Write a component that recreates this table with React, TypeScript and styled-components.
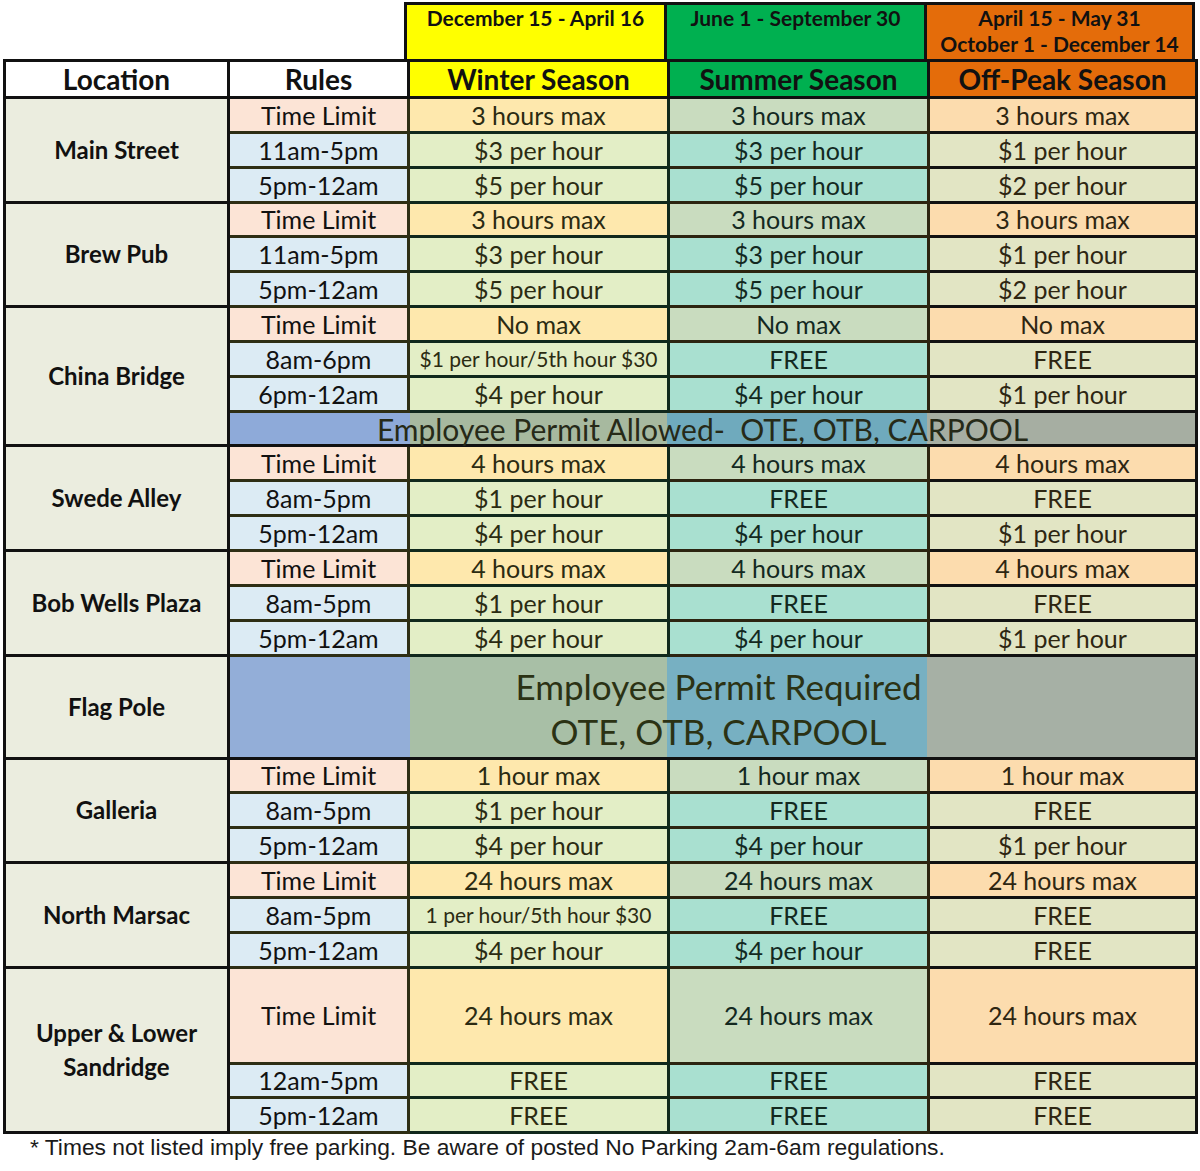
import React from 'react'
import styled, { createGlobalStyle } from 'styled-components'

const GlobalStyle = createGlobalStyle`
  body {
    margin: 0;
    background: #ffffff;
    font-family: Lato, 'Open Sans', sans-serif;
  }
  * {
    box-sizing: border-box;
  }
`

const COLUMNS = '224px 180px 260px 260px 268px'
const ROW = '34.85px'

const Page = styled.div`
  width: 1200px;
  padding-top: 2px;
`

const Table = styled.div`
  margin-left: 3px;
  width: 1195px;
`

const Grid = styled.div<{ $rows: string }>`
  display: grid;
  grid-template-columns: ${COLUMNS};
  grid-template-rows: ${({ $rows }) => $rows};
`

const DateCell = styled.div<{ $bg: string; $col: number }>`
  grid-column: ${({ $col }) => $col};
  background: ${({ $bg }) => $bg};
  border: 3px solid #111;
  border-bottom: none;
  border-left-width: ${({ $col }) => ($col === 3 ? '3px' : '0')};
  margin-left: ${({ $col }) => ($col === 3 ? '-3px' : '0')};
  display: flex;
  flex-direction: column;
  align-items: center;
  font-weight: 700;
  font-size: 21px;
  line-height: 26px;
  color: #111;
`

const HeadRow = styled(Grid)`
  border-top: 3px solid #111;
  border-bottom: 3px solid #111;
  border-left: 3px solid #111;
`

const HeadCell = styled.div<{ $bg: string }>`
  background: ${({ $bg }) => $bg};
  border-right: 3px solid #111;
  display: flex;
  align-items: center;
  justify-content: center;
  font-weight: 700;
  font-size: 28px;
  color: #111;
`

const Body = styled.div`
  border-left: 3px solid #111;
`

const LocationCell = styled.div`
  grid-column: 1;
  grid-row: 1 / -1;
  background: #ebeddf;
  border-right: 3px solid #111;
  border-bottom: 3px solid #111;
  display: flex;
  align-items: center;
  justify-content: center;
  text-align: center;
  font-weight: 700;
  font-size: 24px;
  line-height: 34px;
  color: #111;
`

const Cell = styled.div<{ $bg: string; $line: string; $ink: string; $small?: boolean }>`
  background: ${({ $bg }) => $bg};
  border-right: 3px solid ${({ $line }) => $line};
  border-bottom: 3px solid ${({ $line }) => $line};
  display: flex;
  align-items: center;
  justify-content: center;
  white-space: nowrap;
  font-size: ${({ $small }) => ($small ? '21px' : '25px')};
  color: ${({ $ink }) => $ink};
`

const PermitBanner = styled.div`
  grid-column: 2 / -1;
  background: linear-gradient(
    to right,
    #8eaad9 0 180px,
    #a7b99f 180px 437px,
    #6faabd 437px 697px,
    #a6aea2 697px
  );
  border-bottom: 3px solid #111;
  border-right: 3px solid #111;
  display: flex;
  align-items: center;
  justify-content: center;
  white-space: pre;
  font-size: 30px;
  color: #262a18;
  padding-right: 20px;
`

const RequiredBanner = styled(PermitBanner)`
  flex-direction: column;
  background: linear-gradient(
    to right,
    #93aed8 0 180px,
    #a8bfa6 180px 437px,
    #77b0c2 437px 697px,
    #a6b0a5 697px
  );
  font-size: 35px;
  line-height: 45px;
  color: #2b3214;
  padding-right: 0;
  padding-left: 12px;
  padding-top: 4px;
`

const Footnote = styled.p`
  margin: 0;
  padding: 0 0 0 30px;
  font-family: 'Liberation Sans', Arial, sans-serif;
  font-size: 22.8px;
  line-height: 26px;
  color: #1a1a1a;
`

type Season = { limitBg: string; priceBg: string; line: string; ink: string }

const RULES = { limitBg: '#fce4d6', priceBg: '#dcebf4', line: '#2e2e14', ink: '#111' }

const SEASONS: Season[] = [
  { limitBg: '#fee8ad', priceBg: '#e3eec6', line: '#10281c', ink: '#2b2b12' },
  { limitBg: '#c9dcbf', priceBg: '#a9e0d0', line: '#2c2410', ink: '#13291f' },
  { limitBg: '#fcdcae', priceBg: '#e2e5c4', line: '#111', ink: '#2e2612' },
]

type Group = {
  name: string[]
  rows: string[][]
  permit?: boolean
  tall?: boolean
}

const GROUPS: Group[] = [
  {
    name: ['Main Street'],
    rows: [
      ['Time Limit', '3 hours max', '3 hours max', '3 hours max'],
      ['11am-5pm', '$3 per hour', '$3 per hour', '$1 per hour'],
      ['5pm-12am', '$5 per hour', '$5 per hour', '$2 per hour'],
    ],
  },
  {
    name: ['Brew Pub'],
    rows: [
      ['Time Limit', '3 hours max', '3 hours max', '3 hours max'],
      ['11am-5pm', '$3 per hour', '$3 per hour', '$1 per hour'],
      ['5pm-12am', '$5 per hour', '$5 per hour', '$2 per hour'],
    ],
  },
  {
    name: ['China Bridge'],
    rows: [
      ['Time Limit', 'No max', 'No max', 'No max'],
      ['8am-6pm', '$1 per hour/5th hour $30', 'FREE', 'FREE'],
      ['6pm-12am', '$4 per hour', '$4 per hour', '$1 per hour'],
    ],
    permit: true,
  },
  {
    name: ['Swede Alley'],
    rows: [
      ['Time Limit', '4 hours max', '4 hours max', '4 hours max'],
      ['8am-5pm', '$1 per hour', 'FREE', 'FREE'],
      ['5pm-12am', '$4 per hour', '$4 per hour', '$1 per hour'],
    ],
  },
  {
    name: ['Bob Wells Plaza'],
    rows: [
      ['Time Limit', '4 hours max', '4 hours max', '4 hours max'],
      ['8am-5pm', '$1 per hour', 'FREE', 'FREE'],
      ['5pm-12am', '$4 per hour', '$4 per hour', '$1 per hour'],
    ],
  },
  { name: ['Flag Pole'], rows: [] },
  {
    name: ['Galleria'],
    rows: [
      ['Time Limit', '1 hour max', '1 hour max', '1 hour max'],
      ['8am-5pm', '$1 per hour', 'FREE', 'FREE'],
      ['5pm-12am', '$4 per hour', '$4 per hour', '$1 per hour'],
    ],
  },
  {
    name: ['North Marsac'],
    rows: [
      ['Time Limit', '24 hours max', '24 hours max', '24 hours max'],
      ['8am-5pm', '1 per hour/5th hour $30', 'FREE', 'FREE'],
      ['5pm-12am', '$4 per hour', '$4 per hour', 'FREE'],
    ],
  },
  {
    name: ['Upper & Lower', 'Sandridge'],
    rows: [
      ['Time Limit', '24 hours max', '24 hours max', '24 hours max'],
      ['12am-5pm', 'FREE', 'FREE', 'FREE'],
      ['5pm-12am', 'FREE', 'FREE', 'FREE'],
    ],
    tall: true,
  },
]

function rowTemplate(g: Group) {
  if (g.rows.length === 0) return '103px'
  if (g.tall) return `96px ${ROW} ${ROW}`
  return `repeat(${g.rows.length + (g.permit ? 1 : 0)}, ${ROW})`
}

function GroupRows({ group }: { group: Group }) {
  return (
    <Grid $rows={rowTemplate(group)}>
      <LocationCell>
        <div>
          {group.name.map((n) => (
            <div key={n}>{n}</div>
          ))}
        </div>
      </LocationCell>
      {group.rows.length === 0 && (
        <RequiredBanner>
          <span>Employee Permit Required</span>
          <span>OTE, OTB, CARPOOL</span>
        </RequiredBanner>
      )}
      {group.rows.map((row, ri) =>
        row.map((text, ci) => {
          const col = ci === 0 ? RULES : SEASONS[ci - 1]
          const bg = ri === 0 ? col.limitBg : col.priceBg
          return (
            <Cell key={ri + '-' + ci} $bg={bg} $line={col.line} $ink={col.ink} $small={text.includes('/')}>
              {text}
            </Cell>
          )
        })
      )}
      {group.permit && <PermitBanner>{'Employee Permit Allowed-  OTE, OTB, CARPOOL'}</PermitBanner>}
    </Grid>
  )
}

export default function App() {
  return (
    <Page>
      <GlobalStyle />
      <Table>
        <Grid $rows="57px">
          <DateCell $bg="#ffff00" $col={3}>
            <span>December 15 - April 16</span>
          </DateCell>
          <DateCell $bg="#00b050" $col={4}>
            <span>June 1 - September 30</span>
          </DateCell>
          <DateCell $bg="#e46c0a" $col={5}>
            <span>April 15 - May 31</span>
            <span>October 1 - December 14</span>
          </DateCell>
        </Grid>
        <HeadRow $rows="34px">
          <HeadCell $bg="#ffffff">Location</HeadCell>
          <HeadCell $bg="#ffffff">Rules</HeadCell>
          <HeadCell $bg="#ffff00">Winter Season</HeadCell>
          <HeadCell $bg="#00b050">Summer Season</HeadCell>
          <HeadCell $bg="#e46c0a">Off-Peak Season</HeadCell>
        </HeadRow>
        <Body>
          {GROUPS.map((g) => (
            <GroupRows key={g.name.join(' ')} group={g} />
          ))}
        </Body>
      </Table>
      <Footnote>* Times not listed imply free parking. Be aware of posted No Parking 2am-6am regulations.</Footnote>
    </Page>
  )
}
